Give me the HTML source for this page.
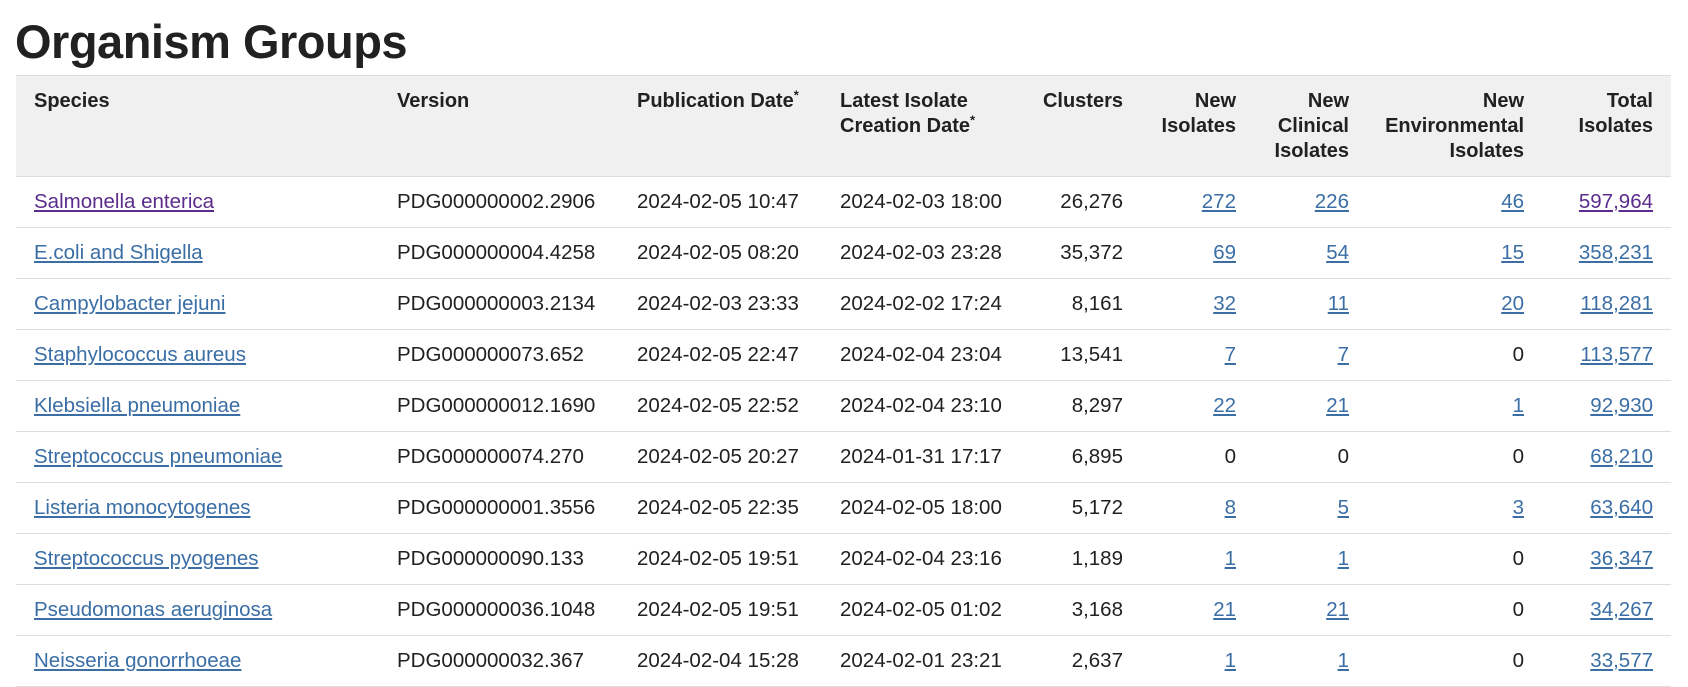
<!DOCTYPE html>
<html><head><meta charset="utf-8"><style>
html,body{margin:0;padding:0;background:#fff;width:1688px;height:682px;overflow:hidden}
body{font-family:"Liberation Sans",Arial,sans-serif;color:#212121}
h1{position:absolute;left:15px;top:10px;margin:0;font-size:47px;font-weight:bold;letter-spacing:-0.5px;line-height:64px}
table{position:absolute;left:16px;top:75px;width:1655px;table-layout:fixed;border-collapse:collapse;font-size:20.5px;border-top:1px solid #ddd}
th,td{box-sizing:border-box}
th{background:#f0f0f0;font-weight:bold;vertical-align:top;text-align:left;padding:13px 18px 0 18px;height:101px;line-height:25px;border-bottom:1px solid #ddd;font-size:20px}
td{height:51px;padding:0 18px;border-bottom:1px solid #ddd;white-space:nowrap}
.r{text-align:right}
a{color:#3a6ea5;text-decoration:underline}
a.v{color:#5b2c8c}
sup{font-size:13px;line-height:0}
</style></head><body>
<h1>Organism Groups</h1>
<table>
<colgroup><col style="width:363px"><col style="width:240px"><col style="width:203px"><col style="width:199px"><col style="width:120px"><col style="width:113px"><col style="width:113px"><col style="width:175px"><col style="width:129px"></colgroup>
<tr><th>Species</th><th>Version</th><th>Publication Date<sup>*</sup></th><th>Latest Isolate<br>Creation Date<sup>*</sup></th><th class="r">Clusters</th><th class="r">New<br>Isolates</th><th class="r">New<br>Clinical<br>Isolates</th><th class="r">New<br>Environmental<br>Isolates</th><th class="r">Total<br>Isolates</th></tr>
<tr><td><a class="v">Salmonella enterica</a></td><td>PDG000000002.2906</td><td>2024-02-05 10:47</td><td>2024-02-03 18:00</td><td class="r">26,276</td><td class="r"><a>272</a></td><td class="r"><a>226</a></td><td class="r"><a>46</a></td><td class="r"><a class="v">597,964</a></td></tr>
<tr><td><a>E.coli and Shigella</a></td><td>PDG000000004.4258</td><td>2024-02-05 08:20</td><td>2024-02-03 23:28</td><td class="r">35,372</td><td class="r"><a>69</a></td><td class="r"><a>54</a></td><td class="r"><a>15</a></td><td class="r"><a>358,231</a></td></tr>
<tr><td><a>Campylobacter jejuni</a></td><td>PDG000000003.2134</td><td>2024-02-03 23:33</td><td>2024-02-02 17:24</td><td class="r">8,161</td><td class="r"><a>32</a></td><td class="r"><a>11</a></td><td class="r"><a>20</a></td><td class="r"><a>118,281</a></td></tr>
<tr><td><a>Staphylococcus aureus</a></td><td>PDG000000073.652</td><td>2024-02-05 22:47</td><td>2024-02-04 23:04</td><td class="r">13,541</td><td class="r"><a>7</a></td><td class="r"><a>7</a></td><td class="r">0</td><td class="r"><a>113,577</a></td></tr>
<tr><td><a>Klebsiella pneumoniae</a></td><td>PDG000000012.1690</td><td>2024-02-05 22:52</td><td>2024-02-04 23:10</td><td class="r">8,297</td><td class="r"><a>22</a></td><td class="r"><a>21</a></td><td class="r"><a>1</a></td><td class="r"><a>92,930</a></td></tr>
<tr><td><a>Streptococcus pneumoniae</a></td><td>PDG000000074.270</td><td>2024-02-05 20:27</td><td>2024-01-31 17:17</td><td class="r">6,895</td><td class="r">0</td><td class="r">0</td><td class="r">0</td><td class="r"><a>68,210</a></td></tr>
<tr><td><a>Listeria monocytogenes</a></td><td>PDG000000001.3556</td><td>2024-02-05 22:35</td><td>2024-02-05 18:00</td><td class="r">5,172</td><td class="r"><a>8</a></td><td class="r"><a>5</a></td><td class="r"><a>3</a></td><td class="r"><a>63,640</a></td></tr>
<tr><td><a>Streptococcus pyogenes</a></td><td>PDG000000090.133</td><td>2024-02-05 19:51</td><td>2024-02-04 23:16</td><td class="r">1,189</td><td class="r"><a>1</a></td><td class="r"><a>1</a></td><td class="r">0</td><td class="r"><a>36,347</a></td></tr>
<tr><td><a>Pseudomonas aeruginosa</a></td><td>PDG000000036.1048</td><td>2024-02-05 19:51</td><td>2024-02-05 01:02</td><td class="r">3,168</td><td class="r"><a>21</a></td><td class="r"><a>21</a></td><td class="r">0</td><td class="r"><a>34,267</a></td></tr>
<tr><td><a>Neisseria gonorrhoeae</a></td><td>PDG000000032.367</td><td>2024-02-04 15:28</td><td>2024-02-01 23:21</td><td class="r">2,637</td><td class="r"><a>1</a></td><td class="r"><a>1</a></td><td class="r">0</td><td class="r"><a>33,577</a></td></tr>
</table>
</body></html>
